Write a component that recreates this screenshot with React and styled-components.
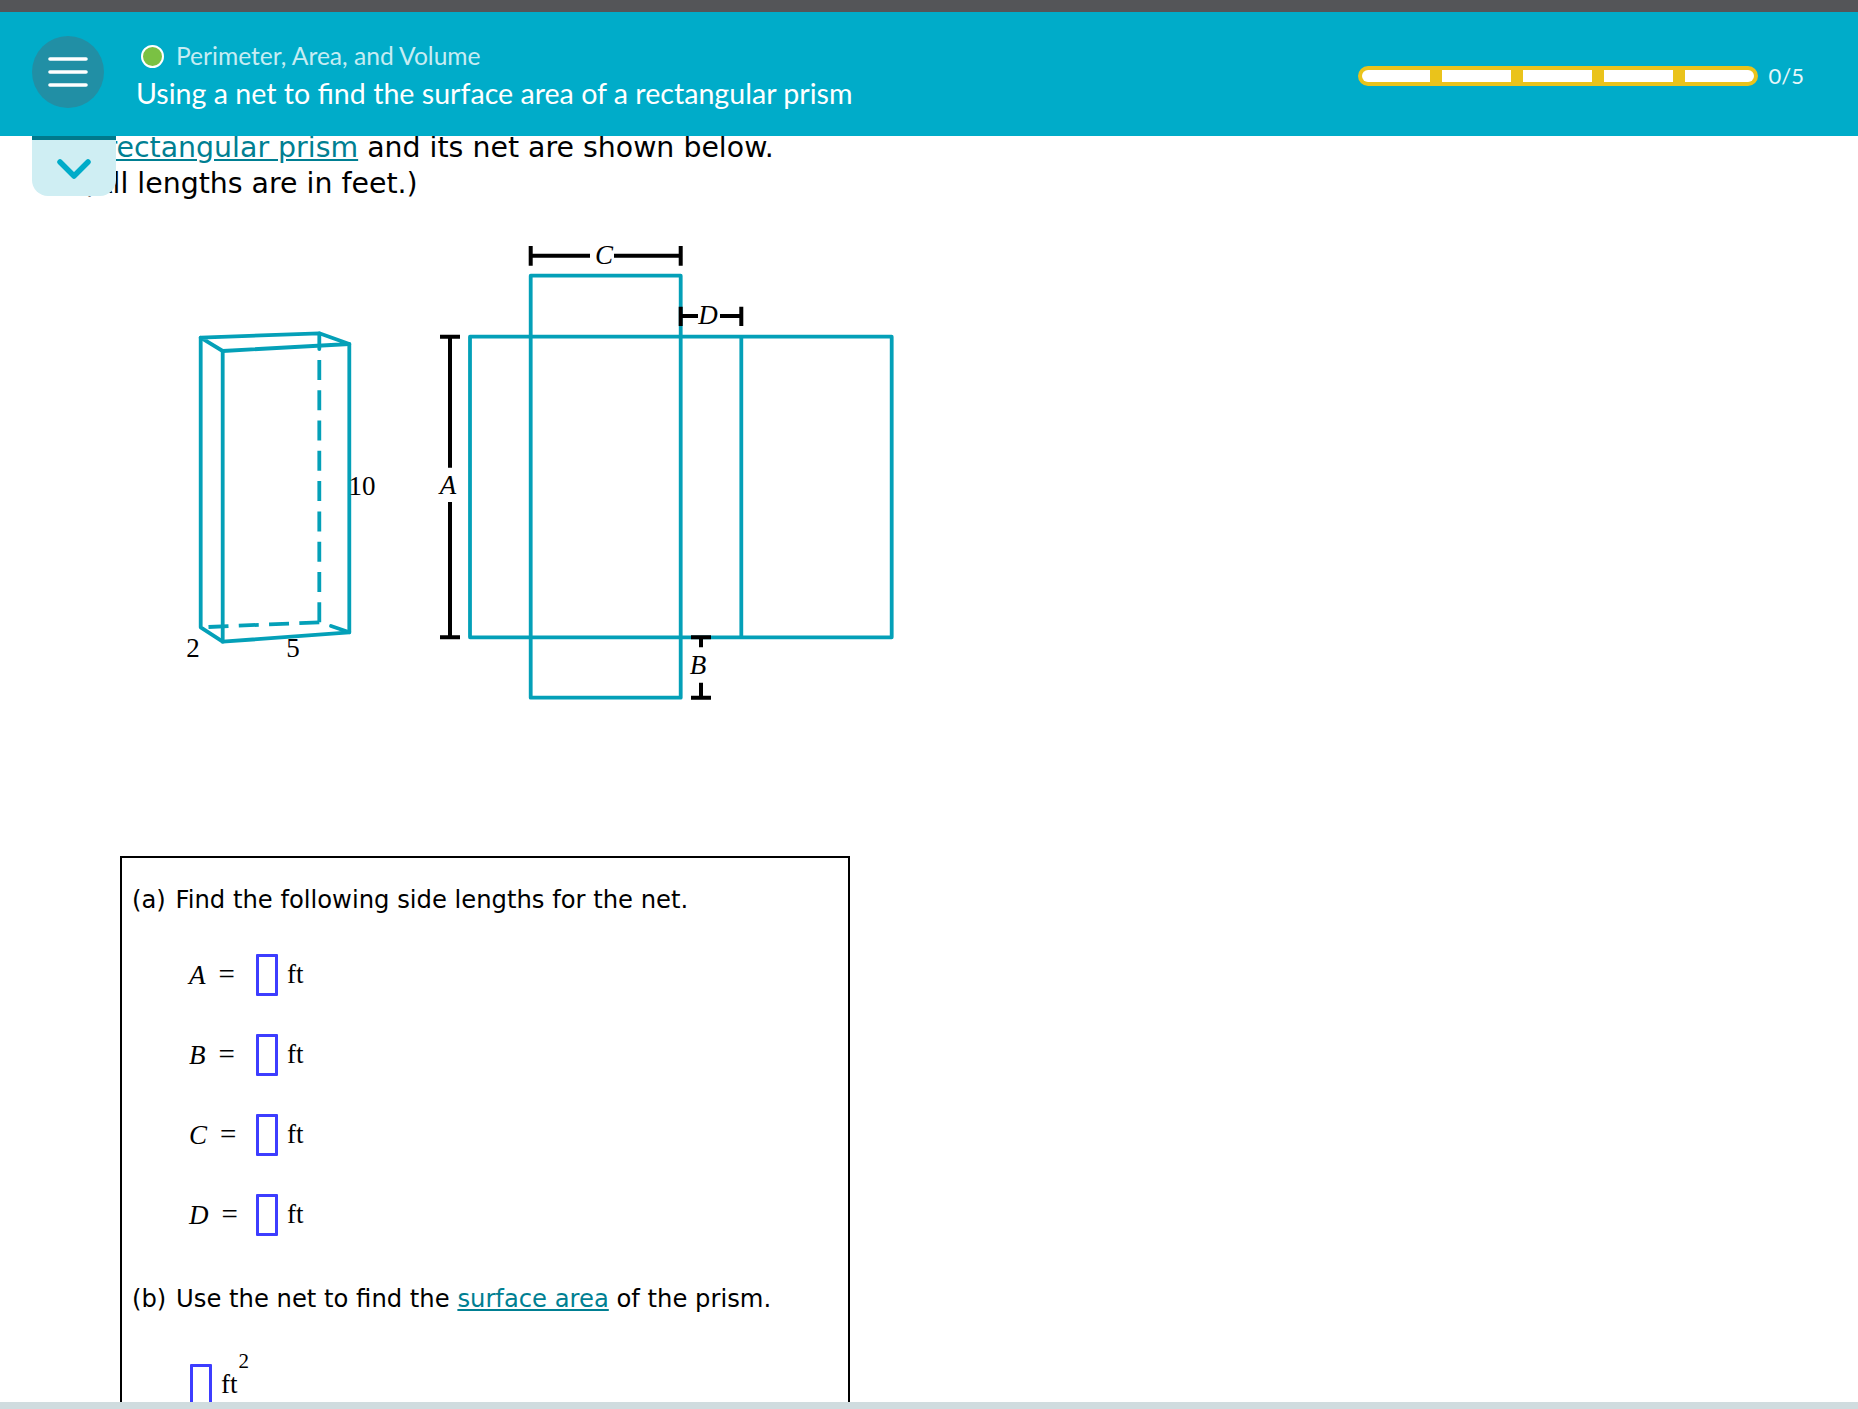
import React from 'react';
import styled, { createGlobalStyle } from 'styled-components';

const GlobalStyle = createGlobalStyle`
  html, body {
    margin: 0;
    padding: 0;
    height: 100%;
    background: #fff;
    overflow: hidden;
  }
`;

const Page = styled.div`
  position: relative;
  height: 1409px;
  overflow: hidden;
  background: #fff;
  color: #000;
  font-family: "DejaVu Sans", Verdana, sans-serif;
  font-size: 24.25px;
  line-height: 36px;
`;

const TopBar = styled.div`
  height: 12px;
  background: #545558;
`;

const Header = styled.header`
  position: relative;
  z-index: 2;
  display: flex;
  align-items: center;
  height: 124px;
  padding: 0 54px 0 32px;
  background: #00acc9;
  font-family: Lato, "Open Sans", sans-serif;
  color: #fff;
`;

const MenuButton = styled.button`
  display: flex;
  align-items: center;
  justify-content: center;
  flex: none;
  width: 72px;
  height: 72px;
  margin-top: -4px;
  padding: 0;
  border: 0;
  border-radius: 50%;
  background: #218fa5;
`;

const Titles = styled.div`
  flex: 1;
  margin-left: 33px;
`;

const TopicRow = styled.div`
  display: flex;
  align-items: center;
  gap: 12px;
  margin: 1px 0 0 4px;
  height: 36px;
  font-size: 24.6px;
  color: #c6ecf3;
`;

const StatusDot = styled.span`
  box-sizing: border-box;
  width: 23px;
  height: 23px;
  border: 2px solid #fff;
  border-radius: 50%;
  background: #7ac143;
`;

const LessonTitle = styled.div`
  font-size: 28.6px;
  line-height: 36px;
  margin-top: 1px;
  margin-left: -1px;
`;

const Progress = styled.div`
  display: flex;
  align-items: center;
  gap: 11px;
  margin-top: 4px;
`;

const ProgressTrack = styled.div`
  display: flex;
  gap: 12px;
  box-sizing: border-box;
  width: 400px;
  height: 20px;
  padding: 4px;
  border-radius: 10px;
  background: #eac31b;
`;

const ProgressSegment = styled.span`
  flex: 1;
  background: #fff;
  &:first-child {
    border-radius: 6px 0 0 6px;
  }
  &:last-child {
    border-radius: 0 6px 6px 0;
  }
`;

const ProgressCount = styled.span`
  font-size: 22px;
  color: #e6f7fa;
`;

const CollapseTab = styled.div`
  position: absolute;
  z-index: 1;
  top: 136px;
  left: 32px;
  display: flex;
  align-items: center;
  justify-content: center;
  box-sizing: border-box;
  width: 84px;
  height: 60px;
  padding-top: 2px;
  border-top: 4px solid #00798c;
  border-radius: 0 0 16px 16px;
  background: #cfeef3;
`;

const Content = styled.main`
  margin-top: -6px;
  padding-left: 85px;
`;

const Line = styled.div`
  margin-left: ${props => props.$indent}px;
  font-size: 28.4px;
  white-space: nowrap;
`;

const TermLink = styled.a`
  color: #007f92;
  text-decoration: underline;
`;

const Diagram = styled.svg`
  display: block;
  width: 740px;
  height: 480px;
  margin: 28px 0 146px 85px;
  overflow: visible;
`;

const Label = styled.text`
  font-family: "Liberation Serif", "Times New Roman", serif;
  font-size: 27px;
  font-style: ${props => (props.$italic ? 'italic' : 'normal')};
  fill: #000;
  text-anchor: middle;
`;

const QuestionBox = styled.section`
  width: 730px;
  margin-left: 35px;
  padding: 24px 10px 40px;
  border: 2px solid #000;
  box-sizing: border-box;
`;

const Prompt = styled.div`
  margin-bottom: ${props => props.$after || 0}px;
  margin-top: ${props => props.$before || 0}px;
  white-space: nowrap;
`;

const PartMark = styled.span`
  margin-right: 2px;
`;

const AnswerRow = styled.div`
  display: grid;
  grid-template-columns: 67px auto 1fr;
  align-items: center;
  height: 80px;
  margin-left: 57px;
  font-family: "Liberation Serif", "Times New Roman", serif;
  font-size: 27px;
  line-height: 34px;
`;

const Equation = styled.span`
  margin-bottom: 2px;
  white-space: nowrap;
`;

const Variable = styled.i`
  margin-right: 13px;
`;

const Equals = styled.span`
  font-size: 29px;
`;

const InputBox = styled.span`
  display: block;
  box-sizing: border-box;
  width: 22px;
  height: 42px;
  border: 3px solid #3d3dff;
  border-radius: 1px;
`;

const Unit = styled.span`
  margin: 0 0 2px 9px;
`;

const AreaAnswer = styled.div`
  display: flex;
  align-items: center;
  margin: 47px 0 0 58px;
  font-family: "Liberation Serif", "Times New Roman", serif;
  font-size: 27px;
`;

const Sup = styled.sup`
  position: relative;
  top: -15px;
  font-size: 21px;
  line-height: 0;
  vertical-align: super;
  margin-left: 1px;
`;

const Footer = styled.div`
  position: absolute;
  z-index: 2;
  left: 0;
  right: 0;
  bottom: 0;
  height: 7px;
  background: #d0dcdf;
`;

const TEAL = '#04a0b8';

const Prism = () => (
  <g fill="none" stroke={TEAL} strokeWidth="3.8" strokeLinejoin="round" strokeLinecap="round">
    <path d="M200.7 337.7 L319.3 333.3 L349.3 344 L222.7 351 Z" />
    <path d="M200.7 337.7 V627.3 L222.7 641.7 L349.3 632.3 V344" />
    <path d="M222.7 351 V641.7" />
    <path d="M319.3 333.3 V349" />
    <path d="M319.3 622.3 V358" strokeDasharray="20 10.3" strokeLinecap="butt" />
    <path d="M319.3 622.3 L208 627" strokeDasharray="20 10.3" strokeLinecap="butt" />
    <path d="M331 626 L349.3 632.3" />
  </g>
);

const Net = () => (
  <g fill="none" stroke={TEAL} strokeWidth="3.8" strokeLinejoin="round">
    <rect x="470" y="336.7" width="421.7" height="300.6" />
    <rect x="530.7" y="275.7" width="150" height="422" />
    <path d="M741.3 336.7 V637.3" />
  </g>
);

const Dimensions = () => (
  <g fill="none" stroke="#000" strokeWidth="4">
    <path d="M440 336.7 H460 M450 336.7 V467.7 M450 502 V637.3 M440 637.3 H460" />
    <path d="M530.7 246 V265.7 M530.7 255.7 H590 M614 255.7 H680.7 M680.7 246 V265.7" />
    <path d="M680.7 306.7 V326 M680.7 316 H698 M720 316 H741.3 M741.3 306.7 V326" />
    <path d="M691 637.3 H711 M701 637.3 V647.3 M701 682.7 V697.7 M691 697.7 H711" />
  </g>
);

const Labels = () => (
  <g>
    <Label x="362" y="495">10</Label>
    <Label x="193" y="657">2</Label>
    <Label x="293" y="657">5</Label>
    <Label $italic x="448" y="494">A</Label>
    <Label $italic x="604" y="264">C</Label>
    <Label $italic x="708" y="324">D</Label>
    <Label $italic x="698" y="674">B</Label>
  </g>
);

const rows = ['A', 'B', 'C', 'D'];

const App = () => (
  <Page>
    <GlobalStyle />
    <TopBar />
    <Header>
      <MenuButton aria-label="Menu">
        <svg width="40" height="30" viewBox="0 0 40 30">
          <path d="M2 2 H38 M2 15 H38 M2 28 H38" stroke="#fff" strokeWidth="3.6" strokeLinecap="round" />
        </svg>
      </MenuButton>
      <Titles>
        <TopicRow>
          <StatusDot />
          Perimeter, Area, and Volume
        </TopicRow>
        <LessonTitle>Using a net to find the surface area of a rectangular prism</LessonTitle>
      </Titles>
      <Progress>
        <ProgressTrack>
          {[0, 1, 2, 3, 4].map(i => <ProgressSegment key={i} />)}
        </ProgressTrack>
        <ProgressCount>0/5</ProgressCount>
      </Progress>
    </Header>
    <CollapseTab>
      <svg width="34" height="22" viewBox="0 0 34 22">
        <path d="M3 4 L17 18 L31 4" fill="none" stroke="#00acc9" strokeWidth="5.5" strokeLinecap="round" strokeLinejoin="round" />
      </svg>
    </CollapseTab>
    <Content>
      <Line $indent={-8}>A <TermLink>rectangular prism</TermLink> and its net are shown below.</Line>
      <Line $indent={-3}>(All lengths are in feet.)</Line>
      <Diagram viewBox="170 230 740 480">
        <Prism />
        <Net />
        <Dimensions />
        <Labels />
      </Diagram>
      <QuestionBox>
        <Prompt $after={17}><PartMark>(a)</PartMark> Find the following side lengths for the net.</Prompt>
        {rows.map(name => (
          <AnswerRow key={name}>
            <Equation><Variable>{name}</Variable><Equals>=</Equals></Equation>
            <InputBox />
            <Unit>ft</Unit>
          </AnswerRow>
        ))}
        <Prompt $before={26}><PartMark>(b)</PartMark> Use the net to find the <TermLink>surface area</TermLink> of the prism.</Prompt>
        <AreaAnswer>
          <InputBox />
          <Unit>ft<Sup>2</Sup></Unit>
        </AreaAnswer>
      </QuestionBox>
    </Content>
    <Footer />
  </Page>
);

export default App;
